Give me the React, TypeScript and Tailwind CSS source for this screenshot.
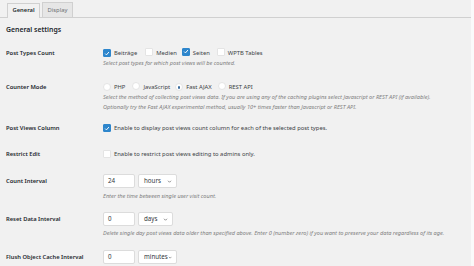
import React from "react";

const Check = ({ checked }: { checked?: boolean }) => (
  <span
    className={`inline-flex w-[8px] h-[8px] items-center justify-center rounded-[1px] border shrink-0 ${
      checked ? "bg-[#2e86cc] border-[#2e86cc]" : "bg-white border-[#e4e4e4]"
    }`}
  >
    {checked && (
      <svg viewBox="0 0 10 10" className="w-[7px] h-[7px]">
        <path d="M2 5.2 L4.1 7.3 L8.2 2.6" fill="none" stroke="white" strokeWidth="1.6" />
      </svg>
    )}
  </span>
);

const Radio = ({ checked }: { checked?: boolean }) => (
  <span className="inline-flex w-[8px] h-[8px] items-center justify-center rounded-full border border-[#e4e4e4] bg-white shrink-0">
    {checked && <span className="w-[2.5px] h-[2.5px] rounded-full bg-[#3c6e9e]" />}
  </span>
);

const Select = ({ value, w }: { value: string; w: string }) => (
  <div
    className={`${w} h-[14px] bg-white border border-[#dcdcdc] rounded-[2px] flex items-center justify-between pl-[5px] pr-[4px] text-[6.2px] text-[#32373c]`}
  >
    <span>{value}</span>
    <svg viewBox="0 0 10 10" className="w-[5px] h-[5px]">
      <path d="M2 3.5 L5 6.5 L8 3.5" fill="none" stroke="#555" strokeWidth="1.3" />
    </svg>
  </div>
);

const Input = ({ value }: { value: string }) => (
  <div className="w-[32px] h-[14px] bg-white border border-[#dcdcdc] rounded-[2px] flex items-center pl-[4px] text-[6.2px] text-[#32373c]">
    {value}
  </div>
);

const Desc = ({ children }: { children: React.ReactNode }) => (
  <div className="italic text-[5.6px] leading-[10px] text-[#808080] whitespace-nowrap">{children}</div>
);

export default function App() {
  return (
    <div
      className="w-[474px] h-[266px] bg-[#f1f1f1] flex overflow-hidden text-[#23282d]"
      style={{ fontFamily: '"Noto Sans", "Open Sans", sans-serif' }}
    >
      <div className="flex-1 flex flex-col">
        {/* tabs */}
        <div className="h-[18px] border-b border-[#d0d0d0] flex items-end pl-[7px] gap-[2px]">
          <div className="h-[15px] w-[33px] border border-b-0 border-[#d0d0d0] bg-[#f1f1f1] flex items-center justify-center text-[5.8px] font-semibold text-[#23282d] -mb-px pb-px">
            General
          </div>
          <div className="h-[15px] w-[31px] border border-b-0 border-[#d0d0d0] bg-[#e6e6e6] flex items-center justify-center text-[5.8px] text-[#6b6f73]">
            Display
          </div>
        </div>

        <div className="pl-[6px]">
          <div className="mt-[6px] h-[12px] leading-[12px] text-[6.9px] font-semibold">General settings</div>

          {/* Post Types Count */}
          <div className="mt-[12px] flex">
            <div className="w-[97px] text-[5.8px] font-semibold leading-[10px]">Post Types Count</div>
            <div>
              <div className="flex items-center h-[10px] text-[5.85px] text-[#3c4246]">
                <Check checked />
                <span className="ml-[3px]">Beiträge</span>
                <span className="ml-[8px]"><Check /></span>
                <span className="ml-[3px]">Medien</span>
                <span className="ml-[5px]"><Check checked /></span>
                <span className="ml-[3px]">Seiten</span>
                <span className="ml-[7px]"><Check /></span>
                <span className="ml-[3px]">WPTB Tables</span>
              </div>
              <Desc>Select post types for which post views will be counted.</Desc>
            </div>
          </div>

          {/* Counter Mode */}
          <div className="mt-[14px] flex">
            <div className="w-[97px] text-[5.8px] font-semibold leading-[10px]">Counter Mode</div>
            <div>
              <div className="flex items-center h-[10px] text-[5.85px] text-[#3c4246]">
                <Radio />
                <span className="ml-[3px]">PHP</span>
                <span className="ml-[7px]"><Radio /></span>
                <span className="ml-[3px]">JavaScript</span>
                <span className="ml-[5px]"><Radio checked /></span>
                <span className="ml-[3px]">Fast AJAX</span>
                <span className="ml-[6px]"><Radio /></span>
                <span className="ml-[3px]">REST API</span>
              </div>
              <Desc>
                Select the method of collecting post views data. If you are using any of the caching plugins select Javascript or REST API (if available).
              </Desc>
              <Desc>
                Optionally try the Fast AJAX experimental method, usually 10+ times faster than Javascript or REST API.
              </Desc>
            </div>
          </div>

          {/* Post Views Column */}
          <div className="mt-[11px] flex">
            <div className="w-[97px] text-[5.8px] font-semibold leading-[10px]">Post Views Column</div>
            <div className="flex items-center h-[10px] text-[5.85px] text-[#3c4246]">
              <Check checked />
              <span className="ml-[3px]">Enable to display post views count column for each of the selected post types.</span>
            </div>
          </div>

          {/* Restrict Edit */}
          <div className="mt-[16px] flex">
            <div className="w-[97px] text-[5.8px] font-semibold leading-[10px]">Restrict Edit</div>
            <div className="flex items-center h-[10px] text-[5.85px] text-[#3c4246]">
              <Check />
              <span className="ml-[3px]">Enable to restrict post views editing to admins only.</span>
            </div>
          </div>

          {/* Count Interval */}
          <div className="mt-[15px] flex">
            <div className="w-[97px] text-[5.8px] font-semibold leading-[14px]">Count Interval</div>
            <div>
              <div className="flex gap-[3px]">
                <Input value="24" />
                <Select value="hours" w="w-[39px]" />
              </div>
              <div className="mt-[3px]">
                <Desc>Enter the time between single user visit count.</Desc>
              </div>
            </div>
          </div>

          {/* Reset Data Interval */}
          <div className="mt-[11px] flex">
            <div className="w-[97px] text-[5.8px] font-semibold leading-[14px]">Reset Data Interval</div>
            <div>
              <div className="flex gap-[3px]">
                <Input value="0" />
                <Select value="days" w="w-[35px]" />
              </div>
              <div className="mt-[2px]">
                <Desc>
                  Delete single day post views data older than specified above. Enter 0 (number zero) if you want to preserve your data regardless of its age.
                </Desc>
              </div>
            </div>
          </div>

          {/* Flush Object Cache Interval */}
          <div className="mt-[12px] flex">
            <div className="w-[97px] text-[5.8px] font-semibold leading-[14px]">Flush Object Cache Interval</div>
            <div className="flex gap-[3px]">
              <Input value="0" />
              <Select value="minutes" w="w-[39px]" />
            </div>
          </div>
        </div>
      </div>
      <div className="w-[3px] bg-[#fafafa]" />
    </div>
  );
}
